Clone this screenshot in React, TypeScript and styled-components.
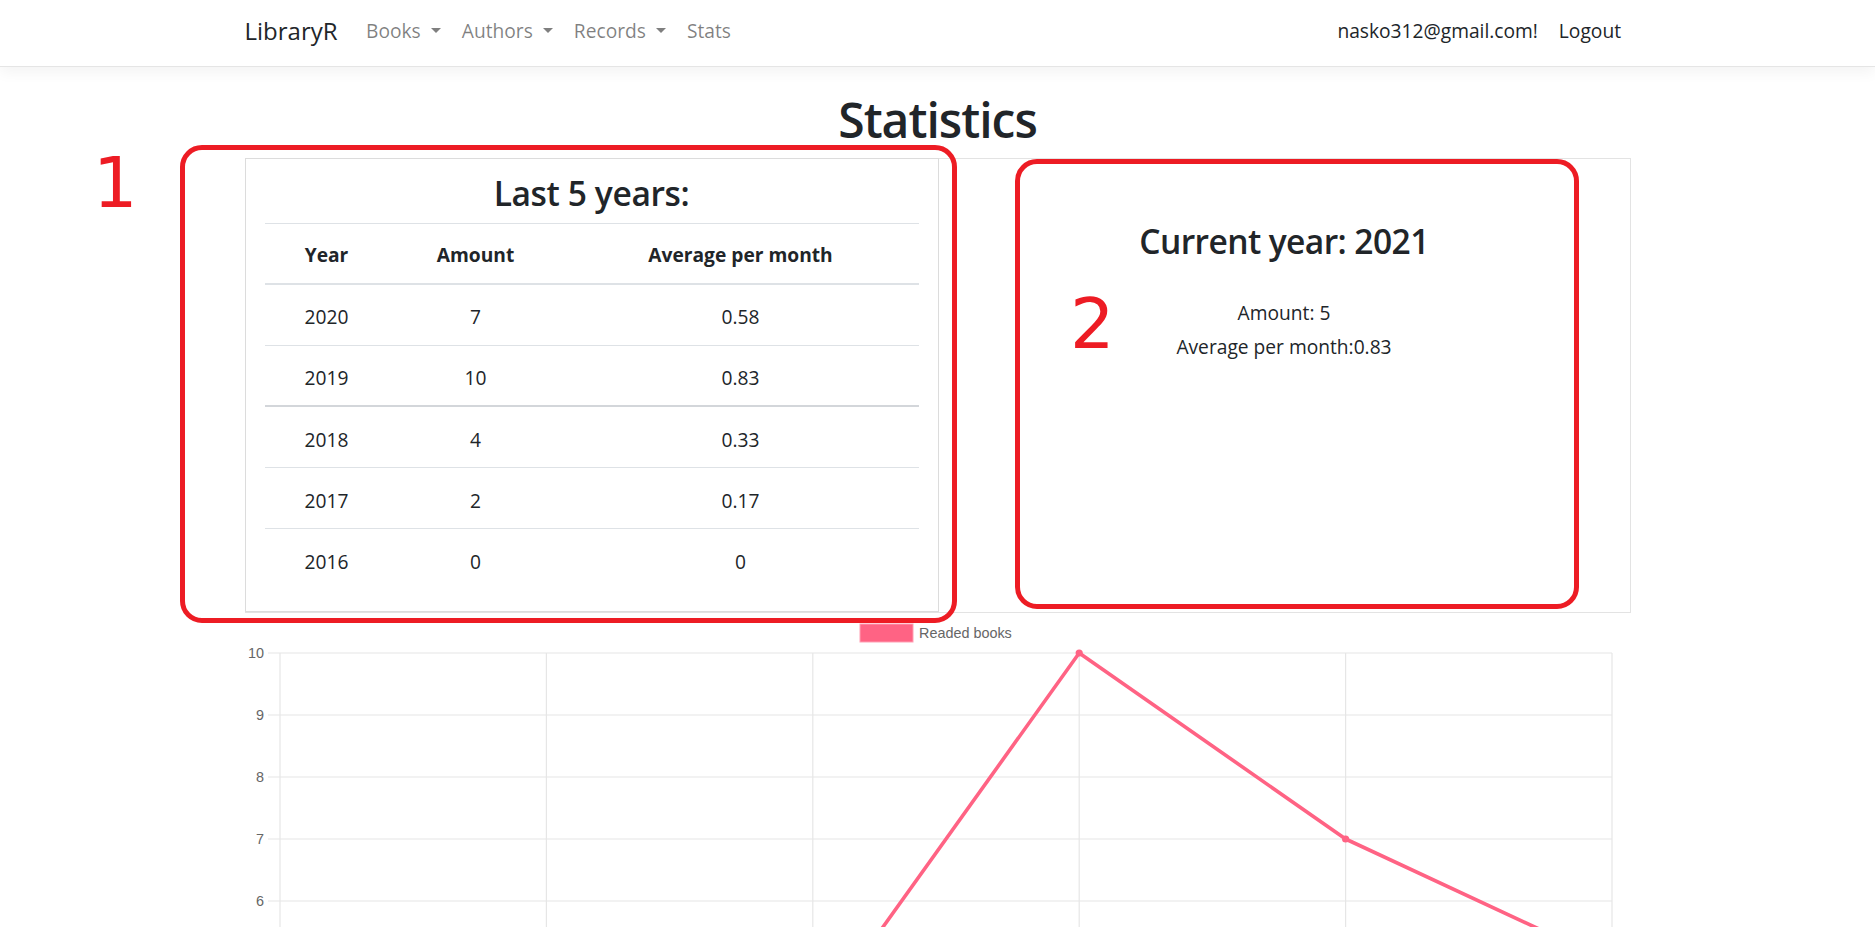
import React from 'react'
import styled, { createGlobalStyle } from 'styled-components'

const GlobalStyle = createGlobalStyle`
  html, body {
    margin: 0;
    padding: 0;
    overflow: hidden;
    background: #fff;
  }
  body {
    font-family: "Open Sans", "Noto Sans", sans-serif;
    font-size: 19.2px;
    line-height: 1.5;
    color: #212529;
  }
  * { box-sizing: border-box; }
`

const lastYears = [
  { year: 2020, amount: 7, avg: '0.58' },
  { year: 2019, amount: 10, avg: '0.83' },
  { year: 2018, amount: 4, avg: '0.33', thick: true },
  { year: 2017, amount: 2, avg: '0.17' },
  { year: 2016, amount: 0, avg: '0' },
]

const chartYears = [2016, 2017, 2018, 2019, 2020, 2021]
const chartValues = [0, 2, 4, 10, 7, 5]

const App = () => {
  return (
    <Page>
      <GlobalStyle />
      <Navbar>
        <NavInner>
          <Brand>LibraryR</Brand>
          <NavLink $dropdown>Books</NavLink>
          <NavLink $dropdown>Authors</NavLink>
          <NavLink $dropdown>Records</NavLink>
          <NavLink>Stats</NavLink>
          <NavRight>
            <NavLink $dark>nasko312@gmail.com!</NavLink>
            <NavLink $dark>Logout</NavLink>
          </NavRight>
        </NavInner>
      </Navbar>

      <Main>
        <Title>Statistics</Title>
        <StatsRow>
          <Card>
            <CardTitle>Last 5 years:</CardTitle>
            <Table>
              <colgroup>
                <col style={{ width: 124 }} />
                <col style={{ width: 174 }} />
                <col />
              </colgroup>
              <thead>
                <tr>
                  <Th>Year</Th>
                  <Th>Amount</Th>
                  <Th>Average per month</Th>
                </tr>
              </thead>
              <tbody>
                {lastYears.map((r) => (
                  <tr key={r.year}>
                    <Td $thick={r.thick}>{r.year}</Td>
                    <Td $thick={r.thick}>{r.amount}</Td>
                    <Td $thick={r.thick}>{r.avg}</Td>
                  </tr>
                ))}
              </tbody>
            </Table>
          </Card>
          <Current>
            <CurrentTitle>Current year: 2021</CurrentTitle>
            <Info>Amount: 5</Info>
            <Info>Average per month:0.83</Info>
          </Current>
        </StatsRow>
        <Chart />
      </Main>

      <Marker $left={180} $top={145} $w={777} $h={478} />
      <Marker $left={1015} $top={159} $w={564} $h={450} />
      <MarkerNumber $left={93} $top={148}>1</MarkerNumber>
      <MarkerNumber $left={1070} $top={289}>2</MarkerNumber>
    </Page>
  )
}

const Chart = () => {
  const left = 35
  const right = 1367
  const top = 40
  const unit = 62
  const step = (right - left) / (chartYears.length - 1)
  const xs = chartYears.map((_, i) => left + i * step)
  const y = (v: number) => top + (10 - v) * unit
  const ticks = [10, 9, 8, 7, 6, 5, 4, 3, 2, 1, 0]
  const points = chartValues.map((v, i) => `${xs[i]},${y(v)}`).join(' ')

  return (
    <ChartSvg width={1386} height={720} viewBox="0 0 1386 720">
      <rect x={615} y={11} width={53} height={18} fill="#ff6384" stroke="#ff9fb3" strokeWidth={1} />
      <LegendText x={674} y={25}>Readed books</LegendText>

      {ticks.map((t) => (
        <g key={t}>
          <line x1={23} x2={right} y1={y(t)} y2={y(t)} stroke="#e6e6e6" strokeWidth={1.2} />
          <TickText x={19} y={y(t) + 5} textAnchor="end">{t}</TickText>
        </g>
      ))}
      {xs.map((x, i) => (
        <g key={i}>
          <line x1={x} x2={x} y1={top} y2={y(0) + 12} stroke="#e6e6e6" strokeWidth={1.2} />
          <TickText x={x} y={y(0) + 30} textAnchor="middle">{chartYears[i]}</TickText>
        </g>
      ))}

      <polyline points={points} fill="none" stroke="#ff6384" strokeWidth={3.6} strokeLinejoin="round" />
      {chartValues.map((v, i) => (
        <circle key={i} cx={xs[i]} cy={y(v)} r={3.6} fill="#ff6384" />
      ))}
    </ChartSvg>
  )
}

export default App

const Page = styled.div`
  position: relative;
  min-width: 1875px;
`

const Navbar = styled.nav`
  position: relative;
  height: 67px;
  background: #fff;
  border-bottom: 1px solid #e5e5e5;
  box-shadow: 0 5px 14px rgba(0, 0, 0, 0.05);
`

const NavInner = styled.div`
  width: 1386px;
  height: 100%;
  margin: 0 auto;
  display: flex;
  align-items: center;
  padding-bottom: 4px;
`

const Brand = styled.a`
  font-size: 24px;
  line-height: 1.5;
  color: #212529;
  margin-right: 18px;
  cursor: pointer;
`

const NavLink = styled.a<{ $dropdown?: boolean; $dark?: boolean }>`
  padding: 0 10.5px;
  font-size: 19.2px;
  color: ${(p) => (p.$dark ? '#212529' : 'rgba(0, 0, 0, 0.5)')};
  cursor: pointer;
  white-space: nowrap;

  ${(p) =>
    p.$dropdown &&
    `
    &::after {
      content: "";
      display: inline-block;
      margin-left: 10px;
      vertical-align: 0.255em;
      border-top: 0.3em solid;
      border-right: 0.3em solid transparent;
      border-left: 0.3em solid transparent;
    }
  `}
`

const NavRight = styled.div`
  margin-left: auto;
  margin-right: -1px;
  display: flex;
  align-items: center;
`

const Main = styled.main`
  width: 1386px;
  margin: 0 auto;
  padding-top: 24px;
`

const Title = styled.h1`
  margin: 0 0 9.6px;
  text-align: center;
  font-size: 48px;
  font-weight: 600;
  line-height: 1.2;
  letter-spacing: -1px;
`

const StatsRow = styled.section`
  display: flex;
  height: 455px;
  border: 1px solid #e3e3e3;
`

const Card = styled.div`
  width: 694px;
  height: 454px;
  margin: -1px 0 0 -1px;
  border: 1px solid #dcdcdc;
  padding: 14px 19px 0;
`

const CardTitle = styled.h3`
  margin: 0 0 9.6px;
  text-align: center;
  font-size: 33.6px;
  font-weight: 600;
  line-height: 1.2;
  letter-spacing: -0.4px;
`

const Table = styled.table`
  width: 100%;
  border-collapse: collapse;
  table-layout: fixed;
  text-align: center;
`

const Th = styled.th`
  padding: 17px 0 13px;
  font-weight: 700;
  line-height: 28.8px;
  border-top: 1px solid #dee2e6;
  border-bottom: 2px solid #dee2e6;
`

const Td = styled.td<{ $thick?: boolean }>`
  padding: 18.5px 0 12.5px;
  line-height: 28.8px;
  border-top: ${(p) => (p.$thick ? '2px solid #d3d6da' : '1px solid #dee2e6')};
`

const Current = styled.div`
  flex: 1;
  text-align: center;
  padding-top: 62px;
`

const CurrentTitle = styled.h3`
  margin: 0 0 34px;
  font-size: 33.6px;
  font-weight: 600;
  line-height: 1.2;
  letter-spacing: -0.6px;
`

const Info = styled.p`
  margin: 0;
  line-height: 34px;
`

const ChartSvg = styled.svg`
  display: block;
`

const LegendText = styled.text`
  font-family: "Liberation Sans", Arial, sans-serif;
  font-size: 14.4px;
  fill: #666;
`

const TickText = styled.text`
  font-family: "Liberation Sans", Arial, sans-serif;
  font-size: 14.4px;
  fill: #666;
`

const Marker = styled.div<{ $left: number; $top: number; $w: number; $h: number }>`
  position: absolute;
  left: ${(p) => p.$left}px;
  top: ${(p) => p.$top}px;
  width: ${(p) => p.$w}px;
  height: ${(p) => p.$h}px;
  border: 5px solid #ed1c24;
  border-radius: 22px;
  pointer-events: none;
`

const MarkerNumber = styled.span<{ $left: number; $top: number }>`
  position: absolute;
  left: ${(p) => p.$left}px;
  top: ${(p) => p.$top}px;
  font-family: "DejaVu Sans", sans-serif;
  font-size: 70px;
  line-height: 1;
  color: #ed1c24;
`
